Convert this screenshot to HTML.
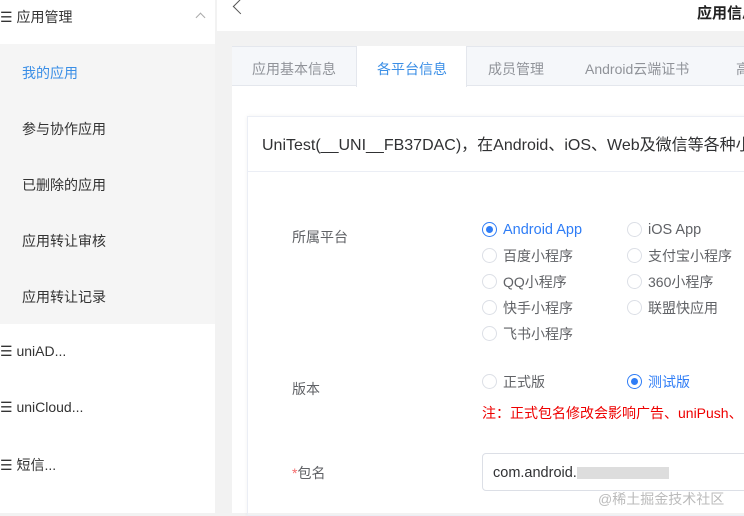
<!DOCTYPE html>
<html><head><meta charset="utf-8"><style>
*{margin:0;padding:0;box-sizing:border-box}
body{width:744px;height:513px;overflow:hidden;background:#f2f2f2;font-family:"Liberation Sans","Noto Sans CJK SC",sans-serif;position:relative;color:#333}
.a{position:absolute;white-space:nowrap}
.side{left:0;top:0;width:215px;height:513px;background:#fff}
.sub{left:0;top:44px;width:215px;height:280px;background:#f5f5f5}
.m{font-size:14px;color:#333}
.s{font-size:14px;color:#333;left:22px}
.r{width:15px;height:15px;border:1px solid #dcdfe6;border-radius:50%;background:#fff}
.r.on{border-color:#2f7df6}
.r.on::after{content:"";position:absolute;left:3px;top:3px;width:7px;height:7px;border-radius:50%;background:#2f7df6}
.t{font-size:14px;color:#606266}
.l{font-size:14px;color:#606266}
</style></head><body>
<div class="a side"></div>
<div class="a sub"></div>
<div class="a m" style="left:0;top:7px">☰ 应用管理</div>
<div class="a" style="left:197px;top:14px;width:7px;height:7px;border-left:1px solid #aaa;border-top:1px solid #aaa;transform:rotate(45deg)"></div>
<div class="a s" style="top:63px;color:#3a8ee6">我的应用</div>
<div class="a s" style="top:119px">参与协作应用</div>
<div class="a s" style="top:175px">已删除的应用</div>
<div class="a s" style="top:231px">应用转让审核</div>
<div class="a s" style="top:287px">应用转让记录</div>
<div class="a m" style="left:0;top:343px">☰ uniAD...</div>
<div class="a m" style="left:0;top:399px">☰ uniCloud...</div>
<div class="a m" style="left:0;top:455px">☰ 短信...</div>
<div class="a" style="left:217px;top:0;width:527px;height:31px;background:#fff"></div>
<div class="a" style="left:235px;top:1px;width:11px;height:11px;border-left:1.5px solid #555;border-bottom:1.5px solid #555;transform:rotate(45deg)"></div>
<div class="a" style="left:697px;top:2px;font-size:15px;font-weight:bold;color:#222">应用信息</div>
<div class="a" style="left:232px;top:46px;width:512px;height:467px;background:#fff"></div>
<div class="a" style="left:232px;top:46px;width:512px;height:40px;background:#f5f7fa;border-bottom:1px solid #e4e7ed;border-top:1px solid #e4e7ed"></div>
<div class="a" style="left:356px;top:46px;width:111px;height:41px;background:#fff;border-left:1px solid #e4e7ed;border-right:1px solid #e4e7ed"></div>
<div class="a t" style="left:252px;top:59px;color:#909399">应用基本信息</div>
<div class="a t" style="left:377px;top:59px;color:#3a8ee6">各平台信息</div>
<div class="a t" style="left:488px;top:59px;color:#909399">成员管理</div>
<div class="a t" style="left:585px;top:59px;color:#909399">Android云端证书</div>
<div class="a t" style="left:736px;top:59px;color:#909399">高</div>
<div class="a" style="left:247px;top:116px;width:510px;height:400px;border:1px solid #ebeef5;box-shadow:0 0 4px rgba(0,0,0,.05)"></div>
<div class="a" style="left:248px;top:171px;width:500px;height:1px;background:#ebeef5"></div>
<div class="a" style="left:262px;top:131px;font-size:16px;color:#303133">UniTest(__UNI__FB37DAC)，在Android、iOS、Web及微信等各种小</div>
<div class="a t" style="left:292px;top:227px">所属平台</div>
<div class="a t" style="left:292px;top:379px">版本</div>
<div class="a t" style="left:292px;top:463px"><span style="color:#f56c6c">*</span>包名</div>
<div class="a r on" style="left:482px;top:222px"></div><div class="a l" style="left:503px;top:222px;color:#2f7df6;font-size:14.5px">Android App</div>
<div class="a r" style="left:627px;top:222px"></div><div class="a l" style="left:648px;top:222px;font-size:14.5px">iOS App</div>
<div class="a r" style="left:482px;top:248px"></div><div class="a l" style="left:503px;top:246px">百度小程序</div>
<div class="a r" style="left:627px;top:248px"></div><div class="a l" style="left:648px;top:246px">支付宝小程序</div>
<div class="a r" style="left:482px;top:274px"></div><div class="a l" style="left:503px;top:272px">QQ小程序</div>
<div class="a r" style="left:627px;top:274px"></div><div class="a l" style="left:648px;top:272px">360小程序</div>
<div class="a r" style="left:482px;top:300px"></div><div class="a l" style="left:503px;top:298px">快手小程序</div>
<div class="a r" style="left:627px;top:300px"></div><div class="a l" style="left:648px;top:298px">联盟快应用</div>
<div class="a r" style="left:482px;top:326px"></div><div class="a l" style="left:503px;top:324px">飞书小程序</div>
<div class="a r" style="left:482px;top:374px"></div><div class="a l" style="left:503px;top:372px">正式版</div>
<div class="a r on" style="left:627px;top:374px"></div><div class="a l" style="left:648px;top:372px;color:#2f7df6">测试版</div>
<div class="a" style="left:482px;top:403px;font-size:14px;color:#e00">注：正式包名修改会影响广告、uniPush、</div>
<div class="a" style="left:482px;top:453px;width:270px;height:38px;border:1px solid #dcdfe6;border-radius:4px"></div>
<div class="a" style="left:493px;top:465px;font-size:14.5px;color:#303133">com.android.<span style="display:inline-block;width:92px;height:12px;background:#ddd;vertical-align:middle"></span></div>
<div class="a" style="left:598px;top:489px;font-size:14px;color:#bbb">@稀土掘金技术社区</div>
</body></html>
